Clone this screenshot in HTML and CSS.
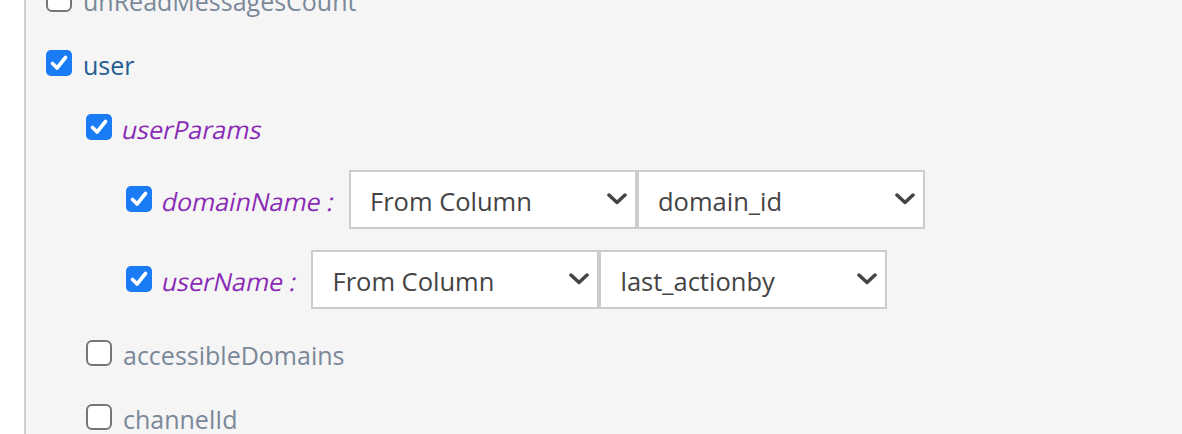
FILE: index.html
```html
<!DOCTYPE html>
<html lang="en">
<head>
  <meta charset="UTF-8" />
  <title>Field Mapping</title>
  <link rel="stylesheet" href="styles.css">
</head>
<body>
  <div class="panel">
    <div class="tree">
      <div class="row level-0">
        <span class="box"></span>
        <span class="name">unReadMessagesCount</span>
      </div>

      <div class="row level-0">
        <span class="box checked">
          <svg viewBox="0 0 26 26"><path d="M6.5 13.5 L11 18 L19.5 7.5" /></svg>
        </span>
        <span class="name object">user</span>
      </div>

      <div class="row level-1">
        <span class="box checked">
          <svg viewBox="0 0 26 26"><path d="M6.5 13.5 L11 18 L19.5 7.5" /></svg>
        </span>
        <span class="name param">userParams</span>
      </div>

      <div class="row level-2 field-row">
        <span class="box checked">
          <svg viewBox="0 0 26 26"><path d="M6.5 13.5 L11 18 L19.5 7.5" /></svg>
        </span>
        <span class="name param">domainName :</span>
        <div class="selects">
          <div class="select">
            <span>From Column</span>
            <svg class="chevron" viewBox="0 0 20 12"><path d="M2 2 L10 9.5 L18 2" /></svg>
          </div>
          <div class="select">
            <span>domain_id</span>
            <svg class="chevron" viewBox="0 0 20 12"><path d="M2 2 L10 9.5 L18 2" /></svg>
          </div>
        </div>
      </div>

      <div class="row level-2 field-row">
        <span class="box checked">
          <svg viewBox="0 0 26 26"><path d="M6.5 13.5 L11 18 L19.5 7.5" /></svg>
        </span>
        <span class="name param">userName :</span>
        <div class="selects">
          <div class="select">
            <span>From Column</span>
            <svg class="chevron" viewBox="0 0 20 12"><path d="M2 2 L10 9.5 L18 2" /></svg>
          </div>
          <div class="select">
            <span>last_actionby</span>
            <svg class="chevron" viewBox="0 0 20 12"><path d="M2 2 L10 9.5 L18 2" /></svg>
          </div>
        </div>
      </div>

      <div class="row level-1 after-fields">
        <span class="box"></span>
        <span class="name">accessibleDomains</span>
      </div>

      <div class="row level-1">
        <span class="box"></span>
        <span class="name">channelId</span>
      </div>
    </div>
  </div>
</body>
</html>
```

FILE: styles.css
```css
html, body {
  height: 100%;
}

body {
  margin: 0;
  background: #ffffff;
  font-family: "Open Sans", "Noto Sans", sans-serif;
  overflow: hidden;
}

.panel {
  margin-left: 24px;
  height: 100%;
  background: #f5f5f5;
  border-left: 2px solid #cfcfcf;
  overflow: hidden;
}

.tree {
  display: flex;
  flex-direction: column;
  margin-top: -33px;
  padding-left: 20px;
}

.row {
  display: flex;
  align-items: center;
  height: 64px;
  gap: 11px;
}

.level-1 {
  padding-left: 40px;
}

.level-2 {
  padding-left: 80px;
}

.field-row {
  height: 80px;
}

.after-fields {
  margin-top: 2px;
}

.box {
  width: 26px;
  height: 26px;
  box-sizing: border-box;
  border: 2px solid #767676;
  border-radius: 6px;
  background: #ffffff;
  flex-shrink: 0;
  display: flex;
}

.box.checked {
  border: none;
  background: #1a7cf4;
  border-radius: 5px;
}

.box svg {
  width: 26px;
  height: 26px;
}

.box svg path {
  fill: none;
  stroke: #ffffff;
  stroke-width: 3.6;
  stroke-linecap: round;
  stroke-linejoin: round;
}

.name {
  font-size: 25px;
  color: #7a8899;
  white-space: nowrap;
  padding-top: 4px;
}

.name.object {
  color: #245c93;
}

/* the original uses a slanted regular face, wider than the true italic */
.name.param {
  display: inline-block;
  color: #8b2ab5;
  transform: skewX(-12deg);
  margin-right: 3px;
}

.selects {
  display: flex;
}

.select {
  width: 288px;
  height: 59px;
  box-sizing: border-box;
  border: 2px solid #cccccc;
  background: #ffffff;
  display: flex;
  align-items: center;
  justify-content: space-between;
  padding: 4px 8px 0 19px;
  font-size: 25.5px;
  color: #444444;
}

.chevron {
  width: 20px;
  height: 12px;
  margin-top: -4px;
}

.chevron path {
  fill: none;
  stroke: #444444;
  stroke-width: 3.5;
  stroke-linecap: round;
  stroke-linejoin: round;
}
```
